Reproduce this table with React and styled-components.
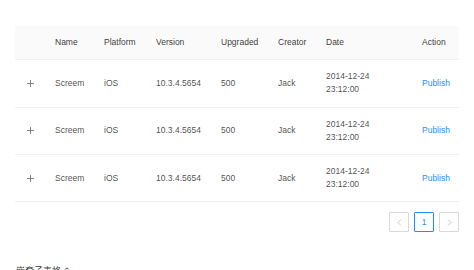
import React from "react";
import styled, { createGlobalStyle } from "styled-components";

const Global = createGlobalStyle`
  html, body { margin: 0; padding: 0; background: #fff; }
  body { font-family: "Liberation Sans", Arial, sans-serif; overflow: hidden; }
`;

const Page = styled.div`
  padding: 26px 15px 0 15px;
  width: 444px;
`;

const Table = styled.table`
  width: 444px;
  border-collapse: collapse;
  table-layout: fixed;
  font-size: 8.5px;
  line-height: 13.2px;
`;

const HeadCell = styled.th`
  background: #fafafa;
  color: rgba(0, 0, 0, 0.8);
  font-weight: 400;
  text-align: left;
  padding: 10px 0 10px 10px;
  border-bottom: 1px solid #f0f0f0;
  white-space: nowrap;
`;

const Cell = styled.td`
  color: rgba(0, 0, 0, 0.72);
  padding: 10px 0 10px 10px;
  border-bottom: 1px solid #f0f0f0;
  vertical-align: middle;
  white-space: nowrap;
`;

const ExpandCell = styled(Cell)`
  padding-left: 0;
  text-align: center;
`;

const PlusIcon = styled.svg`
  display: inline-block;
  vertical-align: middle;
  width: 7px;
  height: 7px;
`;

const Link = styled.a`
  color: #1890ff;
  text-decoration: none;
`;

const Pager = styled.div`
  display: flex;
  justify-content: flex-end;
  gap: 5px;
  margin-top: 10px;
`;

const PageButton = styled.div`
  width: 20px;
  height: 20px;
  box-sizing: border-box;
  border: 1px solid ${(p) => (p.$active ? "#1890ff" : "#d9d9d9")};
  border-radius: 1px;
  display: flex;
  align-items: center;
  justify-content: center;
  color: ${(p) => (p.$active ? "#1890ff" : "#c0c0c0")};
  font-size: 8.5px;
  font-weight: ${(p) => (p.$active ? 500 : 400)};
`;

const Footer = styled.div`
  margin-top: 32px;
  padding-left: 1px;
  font-family: "Noto Sans CJK SC", "Liberation Sans", sans-serif;
  font-size: 9px;
  color: rgba(0, 0, 0, 0.8);
`;

const cols = [30, 49, 52, 65, 57, 48, 96, 47];
const rows = [1, 2, 3];

const Chevron = ({ dir }) => (
  <svg width="5" height="7" viewBox="0 0 5 7">
    <path
      d={dir === "left" ? "M4 0.5 L1 3.5 L4 6.5" : "M1 0.5 L4 3.5 L1 6.5"}
      fill="none"
      stroke="currentColor"
      strokeWidth="0.9"
    />
  </svg>
);

export default function App() {
  return (
    <>
      <Global />
      <Page>
        <Table>
          <colgroup>
            {cols.map((w, i) => (
              <col key={i} style={{ width: w }} />
            ))}
          </colgroup>
          <thead>
            <tr>
              <HeadCell />
              <HeadCell>Name</HeadCell>
              <HeadCell>Platform</HeadCell>
              <HeadCell>Version</HeadCell>
              <HeadCell>Upgraded</HeadCell>
              <HeadCell>Creator</HeadCell>
              <HeadCell>Date</HeadCell>
              <HeadCell>Action</HeadCell>
            </tr>
          </thead>
          <tbody>
            {rows.map((r) => (
              <tr key={r}>
                <ExpandCell>
                  <PlusIcon viewBox="0 0 7 7">
                    <path d="M3.5 0 V7 M0 3.5 H7" stroke="#777" strokeWidth="0.9" />
                  </PlusIcon>
                </ExpandCell>
                <Cell>Screem</Cell>
                <Cell>iOS</Cell>
                <Cell>10.3.4.5654</Cell>
                <Cell>500</Cell>
                <Cell>Jack</Cell>
                <Cell>
                  2014-12-24
                  <br />
                  23:12:00
                </Cell>
                <Cell>
                  <Link>Publish</Link>
                </Cell>
              </tr>
            ))}
          </tbody>
        </Table>
        <Pager>
          <PageButton>
            <Chevron dir="left" />
          </PageButton>
          <PageButton $active>1</PageButton>
          <PageButton>
            <Chevron dir="right" />
          </PageButton>
        </Pager>
        <Footer>嵌套子表格 ⌃</Footer>
      </Page>
    </>
  );
}
